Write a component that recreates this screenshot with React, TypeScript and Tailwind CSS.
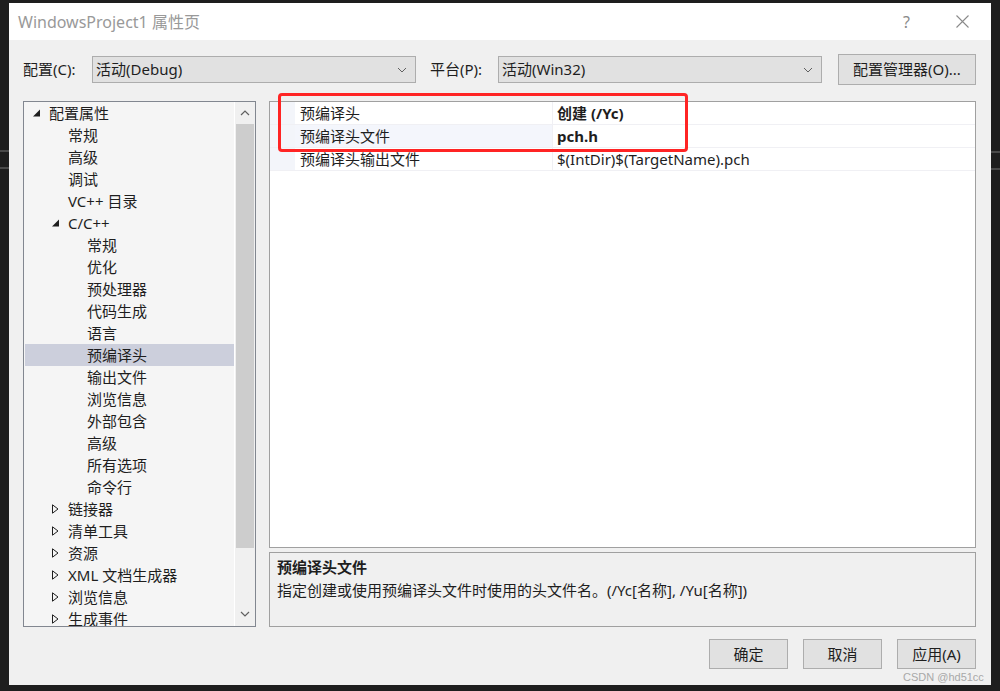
type TreeItem = { t: string; l: number; e?: 'open' | 'closed'; sel?: boolean }

const tree: TreeItem[] = [
  { t: '配置属性', l: 0, e: 'open' },
  { t: '常规', l: 1 },
  { t: '高级', l: 1 },
  { t: '调试', l: 1 },
  { t: 'VC++ 目录', l: 1 },
  { t: 'C/C++', l: 1, e: 'open' },
  { t: '常规', l: 2 },
  { t: '优化', l: 2 },
  { t: '预处理器', l: 2 },
  { t: '代码生成', l: 2 },
  { t: '语言', l: 2 },
  { t: '预编译头', l: 2, sel: true },
  { t: '输出文件', l: 2 },
  { t: '浏览信息', l: 2 },
  { t: '外部包含', l: 2 },
  { t: '高级', l: 2 },
  { t: '所有选项', l: 2 },
  { t: '命令行', l: 2 },
  { t: '链接器', l: 1, e: 'closed' },
  { t: '清单工具', l: 1, e: 'closed' },
  { t: '资源', l: 1, e: 'closed' },
  { t: 'XML 文档生成器', l: 1, e: 'closed' },
  { t: '浏览信息', l: 1, e: 'closed' },
  { t: '生成事件', l: 1, e: 'closed' }
]

const props = [
  { name: '预编译头', value: '创建 (/Yc)', bold: true },
  { name: '预编译头文件', value: 'pch.h', bold: true },
  { name: '预编译头输出文件', value: '$(IntDir)$(TargetName).pch', bold: false }
]

function Chevron() {
  return (
    <svg width="10" height="6" viewBox="0 0 10 6" className="text-[#606060]">
      <path d="M1 1l4 4 4-4" fill="none" stroke="currentColor" strokeWidth="1" />
    </svg>
  )
}

function Arrow({ e }: { e?: 'open' | 'closed' }) {
  if (e === 'open')
    return (
      <svg width="8" height="8" viewBox="0 0 8 8">
        <path d="M7 0.5V7.5H0z" fill="#1e1e1e" />
      </svg>
    )
  if (e === 'closed')
    return (
      <svg width="7" height="10" viewBox="0 0 7 10">
        <path d="M0.5 0.8L6 5 0.5 9.2z" fill="none" stroke="#1e1e1e" strokeWidth="1" />
      </svg>
    )
  return null
}

function Combo({ text }: { text: string }) {
  return (
    <div className="w-[324px] h-[27px] bg-[#e1e1e1] border border-[#adadad] flex items-center pl-[3px] pr-[8px]">
      <span className="flex-1 text-[15px] text-[#1e1e1e]">{text}</span>
      <Chevron />
    </div>
  )
}

function Btn({ text }: { text: string }) {
  return (
    <div className="w-[79px] h-[30px] bg-[#e1e1e1] border border-[#adadad] flex items-center justify-center text-[15px] text-[#1e1e1e]">
      {text}
    </div>
  )
}

export default function App() {
  return (
    <div className="relative w-[1000px] h-[691px] bg-[#1e1e1e] pt-[3px] pl-[9px] overflow-hidden font-['Noto_Sans','Noto_Sans_CJK_SC',sans-serif]">
      {/* editor lines behind the dialog */}
      <div className="absolute left-0 top-[150px] w-[9px] h-[2px] bg-[#4a4a4a]" />
      <div className="absolute left-0 top-[167px] w-[9px] h-[2px] bg-[#4a4a4a]" />
      <div className="absolute right-0 top-[151px] w-[9px] h-[2px] bg-[#4a4a4a]" />
      <div className="absolute right-0 top-[168px] w-[9px] h-[2px] bg-[#4a4a4a]" />

      <div className="w-[982px] h-[682px] flex flex-col bg-[#f0f0f0]">
        {/* Title bar */}
        <div className="h-[37px] bg-white flex items-center pl-[9px] pr-[22px]">
          <span className="flex-1 text-[16px] text-[#999999]">WindowsProject1 属性页</span>
          <span className="text-[16px] text-[#8a8a8a] mr-[46px]">?</span>
          <svg width="13" height="13" viewBox="0 0 13 13">
            <path d="M0.5 0.5l12 12M12.5 0.5l-12 12" stroke="#8a8a8a" strokeWidth="1.1" />
          </svg>
        </div>

        <div className="flex-1 flex flex-col pl-[14px] pr-[15px]">
          {/* Config row */}
          <div className="mt-[14px] h-[31px] flex items-center text-[15px] text-[#1e1e1e]">
            <span className="w-[69px]">配置(C):</span>
            <Combo text="活动(Debug)" />
            <span className="ml-[14px] w-[68px]">平台(P):</span>
            <Combo text="活动(Win32)" />
            <div className="ml-auto w-[138px] h-[31px] bg-[#e1e1e1] border border-[#adadad] flex items-center justify-center">
              配置管理器(O)...
            </div>
          </div>

          {/* Main area */}
          <div className="mt-[16px] flex gap-[13px] h-[526px]">
            {/* Tree */}
            <div className="w-[233px] h-full border border-[#828790] bg-[#f5f5f5] flex overflow-hidden">
              <div className="flex-1 overflow-hidden pl-px border-r border-[#ffffff]">
                {tree.map((it, i) => (
                  <div
                    key={i}
                    className={
                      'h-[22px] flex items-center text-[15px] text-[#1e1e1e] whitespace-nowrap ' +
                      (it.sel ? 'bg-[#cccfdc]' : '')
                    }
                    style={{ paddingLeft: 8 + it.l * 19 }}
                  >
                    <span className="w-[16px] flex items-center">
                      <Arrow e={it.e} />
                    </span>
                    <span>{it.t}</span>
                  </div>
                ))}
              </div>
              <div className="w-[20px] h-full bg-[#f0f0f0] flex flex-col items-center">
                <div className="h-[22px] flex items-center justify-center">
                  <svg width="10" height="6" viewBox="0 0 10 6">
                    <path d="M1 5l4-4 4 4" fill="none" stroke="#606060" strokeWidth="1.2" />
                  </svg>
                </div>
                <div className="w-[18px] h-[424px] bg-[#cdcdcd]" />
                <div className="flex-1" />
                <div className="h-[22px] flex items-center justify-center mb-[1px]">
                  <svg width="10" height="6" viewBox="0 0 10 6">
                    <path d="M1 1l4 4 4-4" fill="none" stroke="#606060" strokeWidth="1.2" />
                  </svg>
                </div>
              </div>
            </div>

            {/* Right side */}
            <div className="flex-1 flex flex-col gap-[4px]">
              <div className="h-[447px] border border-[#a0a0a0] bg-white">
                {props.map((p, i) => (
                  <div key={i} className="h-[23px] flex border-b border-[#f0f0f4] text-[15px] text-[#1e1e1e]">
                    <div className="w-[25px] bg-[#f3f5fa]" />
                    <div
                      className={
                        'w-[258px] flex items-center pl-[5px] border-r border-[#f0f0f4] ' +
                        (i === 1 ? 'bg-[#f4f6fc]' : '')
                      }
                    >
                      {p.name}
                    </div>
                    <div className={'flex-1 flex items-center pl-[4px] ' + (p.bold ? 'font-bold' : '')}>
                      {p.value}
                    </div>
                  </div>
                ))}
              </div>
              <div className="flex-1 border border-[#a0a0a0] bg-[#f0f0f0] px-[7px] pt-[3px] text-[#1e1e1e]">
                <div className="text-[15px] font-bold leading-[22px]">预编译头文件</div>
                <div className="text-[15px] leading-[24px]">
                  指定创建或使用预编译头文件时使用的头文件名。(/Yc[名称], /Yu[名称])
                </div>
              </div>
            </div>
          </div>

          {/* Buttons */}
          <div className="mt-[12px] flex justify-end gap-[15px]">
            <Btn text="确定" />
            <Btn text="取消" />
            <Btn text="应用(A)" />
          </div>
        </div>
      </div>

      {/* annotation */}
      <div className="absolute left-[278px] top-[93px] w-[410px] h-[59px] border-[3px] border-[#ff2424] rounded-[4px]" />
      <div className="absolute left-[903px] top-[669px] text-[11px] text-[#a8a8a8] font-['Liberation_Sans',sans-serif]">
        CSDN @hd51cc
      </div>
    </div>
  )
}
